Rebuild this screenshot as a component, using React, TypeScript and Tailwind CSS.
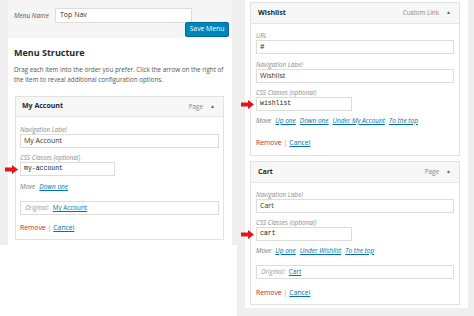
const RedArrow = () => (
  <svg width="13" height="9" viewBox="0 0 13 9" className="absolute">
    <path d="M0 2.5H7V0L13 4.5L7 9V6.5H0Z" fill="#e4161b" />
  </svg>
);

function Field({ label, value, mono, w, mt, arrowX }: { label: string; value: string; mono?: boolean; w?: string; mt: string; arrowX?: string }) {
  return (
    <div className={mt}>
      <div className="h-[9px] text-[6.3px] leading-[9px] italic text-[#8a8a8a]">{label}</div>
      <div className={`relative mt-[0px] flex h-[14px] items-center border border-[#dcdcdc] bg-white px-[3px] ${w ?? "w-full"}`}>
        {arrowX && (
          <div className={`absolute top-[2px] ${arrowX}`}>
            <RedArrow />
          </div>
        )}
        <span className={mono ? "font-['Liberation_Mono',monospace] text-[6.5px] text-[#222]" : "text-[7px] text-[#333]"}>{value}</span>
      </div>
    </div>
  );
}

function Links({ links, mt }: { links: string[]; mt: string }) {
  return (
    <div className={`${mt} flex h-[9px] items-center gap-[4px] text-[6.5px] leading-[9px] italic`}>
      <span className="text-[#777]">Move</span>
      {links.map((l) => (
        <span key={l} className="text-[#0073aa] underline">{l}</span>
      ))}
    </div>
  );
}

function Original({ name, mt }: { name: string; mt: string }) {
  return (
    <div className={`${mt} flex h-[14px] items-center gap-[4px] border border-[#dcdcdc] px-[4px] text-[6.3px]`}>
      <span className="italic text-[#999]">Original:</span>
      <span className="text-[#0073aa] underline">{name}</span>
    </div>
  );
}

function Actions({ mt }: { mt: string }) {
  return (
    <div className={`${mt} flex h-[9px] items-center gap-[2px] text-[6.8px] leading-[9px]`}>
      <span className="text-[#b32d2e]">Remove</span>
      <span className="text-[#999]">|</span>
      <span className="text-[#0073aa] underline">Cancel</span>
    </div>
  );
}

function Header({ title, type, h, pl }: { title: string; type: string; h: string; pl: string }) {
  return (
    <div className={`flex ${h} items-center justify-between border-b border-[#e5e5e5] bg-[#f7f7f7] ${pl} pr-[8px]`}>
      <span className="text-[7px] font-bold text-[#23282d]">{title}</span>
      <span className="flex items-center gap-[7px] text-[6.3px] text-[#888]">
        {type}
        <span className="text-[5px] text-[#666]">▲</span>
      </span>
    </div>
  );
}

export default function App() {
  return (
    <div className="flex h-[316px] w-[474px] items-start overflow-hidden bg-white font-['Open_Sans',sans-serif]">
      {/* left screenshot */}
      <div className="h-[245px] w-[237px] bg-[#efefef] pl-[8px] pr-[5px]">
        <div className="h-full bg-white">
          <div className="h-[38px] bg-[#f5f5f5] pt-[8px]">
            <div className="flex h-[15px] items-center">
              <span className="ml-[6px] w-[41px] text-[6.5px] italic text-[#555]">Menu Name</span>
              <div className="flex h-[15px] w-[137px] items-center border border-[#dcdcdc] bg-white px-[4px] text-[7px] text-[#333]">Top Nav</div>
            </div>
            <div className="-mt-[1px] flex justify-end pr-[3px]">
              <div className="flex h-[15px] w-[44px] items-center justify-center rounded-[2px] border border-[#006799] bg-[#0085ba] text-[6.8px] text-white">Save Menu</div>
            </div>
          </div>
          <div className="pl-[6px] pr-[4px]">
            <div className="mt-[9px] h-[12px] text-[9px] font-bold leading-[12px] text-[#23282d]">Menu Structure</div>
            <div className="mt-[6px] text-[6.3px] leading-[10px] text-[#555]">
              Drag each item into the order you prefer. Click the arrow on the right of the item to reveal additional configuration options.
            </div>
            <div className="relative ml-[1px] mt-[11px] h-[144px] w-[209px] border border-[#e2e2e2] bg-white">
              <Header title="My Account" type="Page" h="h-[20px]" pl="pl-[6px]" />
              <div className="px-[4px]">
                <Field label="Navigation Label" value="My Account" mt="mt-[8px]" />
                <Field label="CSS Classes (optional)" value="my-account" mono w="w-[95px]" mt="mt-[5px]" arrowX="-left-[16px]" />
                <Links links={["Down one"]} mt="mt-[6px]" />
                <Original name="My Account" mt="mt-[10px]" />
                <Actions mt="mt-[8px]" />
              </div>
            </div>
          </div>
        </div>
      </div>
      {/* right screenshot */}
      <div className="h-[316px] w-[237px] bg-[#efefef] pl-[8px] pr-[6px]">
        <div className="h-[308px] bg-white pl-[5px] pr-[8px] pt-[2px]">
          <div className="relative h-[154px] border border-[#e2e2e2] bg-white">
            <Header title="Wishlist" type="Custom Link" h="h-[21px]" pl="pl-[7px]" />
            <div className="px-[5px]">
              <Field label="URL" value="#" mt="mt-[7px]" />
              <Field label="Navigation Label" value="Wishlist" mt="mt-[6px]" />
              <Field label="CSS Classes (optional)" value="wishlist" mono w="w-[96px]" mt="mt-[5px]" arrowX="-left-[16px]" />
              <Links links={["Up one", "Down one", "Under My Account", "To the top"]} mt="mt-[5px]" />
              <Actions mt="mt-[13px]" />
            </div>
          </div>
          <div className="relative mt-[5px] h-[144px] border border-[#e2e2e2] bg-white">
            <Header title="Cart" type="Page" h="h-[21px]" pl="pl-[7px]" />
            <div className="px-[5px]">
              <Field label="Navigation Label" value="Cart" mt="mt-[7px]" />
              <Field label="CSS Classes (optional)" value="cart" mono w="w-[96px]" mt="mt-[5px]" arrowX="-left-[16px]" />
              <Links links={["Up one", "Under Wishlist", "To the top"]} mt="mt-[5px]" />
              <Original name="Cart" mt="mt-[10px]" />
              <Actions mt="mt-[9px]" />
            </div>
          </div>
        </div>
      </div>
    </div>
  );
}
